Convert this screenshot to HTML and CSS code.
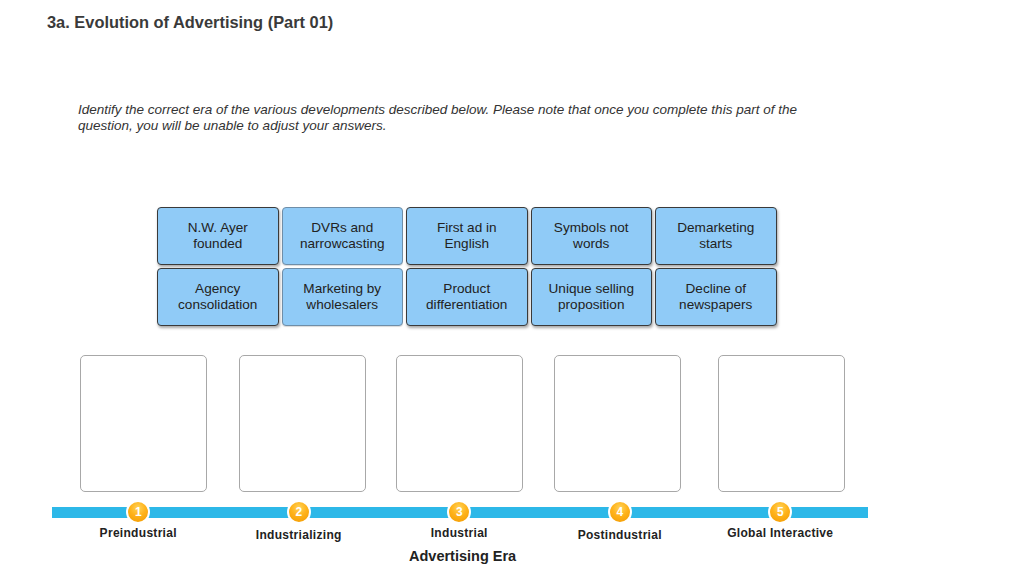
FILE: index.html
```html
<!DOCTYPE html>
<html>
<head>
<meta charset="utf-8">
<link rel="stylesheet" href="styles.css">
</head>
<body>
<div class="page">
  <h1 class="title">3a. Evolution of Advertising (Part 01)</h1>
  <p class="instructions">Identify the correct era of the various developments described below. Please note that once you complete this part of the question, you will be unable to adjust your answers.</p>

  <div class="tiles">
    <div class="tile">N.W. Ayer<br>founded</div>
    <div class="tile tile-soft">DVRs and<br>narrowcasting</div>
    <div class="tile">First ad in<br>English</div>
    <div class="tile">Symbols not<br>words</div>
    <div class="tile">Demarketing<br>starts</div>
    <div class="tile">Agency<br>consolidation</div>
    <div class="tile tile-soft">Marketing by<br>wholesalers</div>
    <div class="tile">Product<br>differentiation</div>
    <div class="tile">Unique selling<br>proposition</div>
    <div class="tile">Decline of<br>newspapers</div>
  </div>

  <div class="drops">
    <div class="drop"></div>
    <div class="drop"></div>
    <div class="drop"></div>
    <div class="drop"></div>
    <div class="drop"></div>
  </div>

  <div class="timeline">
    <div class="bar"></div>
    <div class="marks">
      <div class="mark"><span class="badge">1</span><span class="label">Preindustrial</span></div>
      <div class="mark"><span class="badge">2</span><span class="label label-low">Industrializing</span></div>
      <div class="mark"><span class="badge">3</span><span class="label">Industrial</span></div>
      <div class="mark"><span class="badge">4</span><span class="label label-low">Postindustrial</span></div>
      <div class="mark"><span class="badge">5</span><span class="label">Global Interactive</span></div>
    </div>
  </div>
  <div class="axis-title">Advertising Era</div>
</div>
</body>
</html>
```

FILE: styles.css
```css
html, body {
  margin: 0;
  padding: 0;
  background: #ffffff;
}

.page {
  width: 1024px;
  height: 582px;
  overflow: hidden;
  font-family: "Liberation Sans", Arial, sans-serif;
  color: #333333;
}

.title {
  margin: 0;
  padding: 12px 0 0 47px;
  font-size: 16.4px;
  line-height: 20px;
  font-weight: bold;
  color: #3a3a3a;
}

.instructions {
  margin: 70px 0 0 78px;
  width: 730px;
  font-size: 13.5px;
  line-height: 16px;
  font-style: italic;
  color: #333333;
}

.tiles {
  margin: 73px 0 0 157px;
  display: grid;
  grid-template-columns: repeat(5, 121.5px);
  grid-auto-rows: 58px;
  gap: 3px 3px;
}

.tile {
  box-sizing: border-box;
  background: #90cbf7;
  border: 1px solid #3a3a3a;
  border-radius: 4px;
  box-shadow: 1px 2px 3px rgba(0, 0, 0, 0.35);
  font-size: 13.6px;
  line-height: 16px;
  color: #222222;
  text-align: center;
  padding-top: 12px;
}

.tile-soft {
  border-color: #6f8ea8;
  box-shadow: 0 1px 1px rgba(0, 0, 0, 0.15);
}

.drops {
  margin: 29px 0 0 64px;
  display: grid;
  grid-template-columns: 159px 158px 157px 159px 169px;
  justify-items: center;
}

.drop {
  box-sizing: border-box;
  width: 127px;
  height: 137px;
  border: 1px solid #a8a8a8;
  border-radius: 5px;
  background: #ffffff;
}

.timeline {
  position: relative;
  margin-top: 8px;
}

.bar {
  position: absolute;
  left: 52px;
  top: 7px;
  width: 816px;
  height: 11px;
  background: #2db8e8;
}

.marks {
  position: relative;
  margin-left: 58px;
  display: grid;
  grid-template-columns: repeat(5, 160.5px);
}

.mark {
  display: flex;
  flex-direction: column;
  align-items: center;
}

.badge {
  box-sizing: border-box;
  width: 24px;
  height: 24px;
  border-radius: 50%;
  border: 2px solid #ffffff;
  background: radial-gradient(circle at 50% 30%, #ffd45a 0%, #ffb21a 45%, #f29a00 100%);
  color: #ffffff;
  font-size: 12px;
  font-weight: bold;
  line-height: 20px;
  text-align: center;
}

.label {
  margin-top: 2px;
  font-size: 12px;
  line-height: 14px;
  font-weight: bold;
  letter-spacing: 0.3px;
  color: #222222;
}

.label-low {
  margin-top: 4px;
}

.axis-title {
  margin: 5px 0 0 0;
  padding-left: 409px;
  font-size: 14.5px;
  line-height: 18px;
  font-weight: bold;
  color: #222222;
}
```
